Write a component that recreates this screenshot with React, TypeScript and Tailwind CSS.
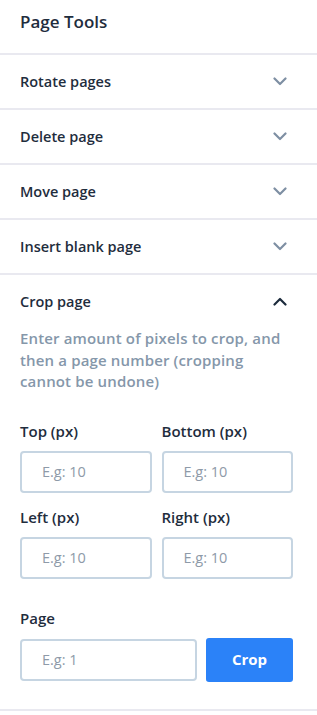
import React from "react";

const Chevron = ({ up = false, dark = false }: { up?: boolean; dark?: boolean }) => (
  <svg width="14" height="9" viewBox="0 0 14 9" fill="none" className={dark ? "text-[#1c2b3c]" : "text-[#7e8fa3]"}>
    <path d={up ? "M1.5 7.5L7 2L12.5 7.5" : "M1.5 1.5L7 7L12.5 1.5"} stroke="currentColor" strokeWidth="2.2" strokeLinecap="round" strokeLinejoin="round" />
  </svg>
);

const Row = ({ label }: { label: string }) => (
  <div className="border-t-2 border-[#e9e9f0] h-[55px] pl-5 pr-6 flex items-center justify-between">
    <span className="text-[14.5px] font-semibold text-[#1f2d3d]">{label}</span>
    <span className="mr-[6px] flex items-center"><Chevron /></span>
  </div>
);

const Field = ({ label, ph, className = "" }: { label: string; ph: string; className?: string }) => (
  <div className={"flex flex-col " + className}>
    <label className="text-[15px] leading-[20px] font-semibold text-[#1f2d3d] mb-[10px]">{label}</label>
    <input
      placeholder={ph}
      className="h-[42px] w-full rounded-[4px] border-2 border-[#c6d5e2] pl-5 text-[14.5px] text-[#1f2d3d] placeholder:text-[#8e9aa8] outline-none bg-white"
    />
  </div>
);

export default function App() {
  return (
    <div className="w-[317px] min-h-[715px] bg-white" style={{ fontFamily: "'Open Sans', Lato, sans-serif" }}>
      <div className="h-[53px] pl-5 pr-6 flex items-center">
        <h1 className="text-[17px] font-semibold text-[#1f2d3d] -mt-[10px]">Page Tools</h1>
      </div>
      <Row label="Rotate pages" />
      <Row label="Delete page" />
      <Row label="Move page" />
      <Row label="Insert blank page" />
      <div className="border-t-2 border-[#e9e9f0] pl-5 pr-6 pb-[27px]">
        <div className="h-[53px] flex items-center justify-between">
          <span className="text-[14.5px] font-semibold text-[#1f2d3d]">Crop page</span>
          <span className="mr-[6px] flex items-center"><Chevron up dark /></span>
        </div>
        <p className="text-[15px] leading-[21.5px] tracking-[0.15px] font-semibold text-[#8597aa]">
          Enter amount of pixels to crop, and then a page number (cropping cannot be undone)
        </p>
        <div className="grid grid-cols-2 gap-x-[10px] mt-[28px]">
          <Field label="Top (px)" ph="E.g: 10" />
          <Field label="Bottom (px)" ph="E.g: 10" />
          <Field label="Left (px)" ph="E.g: 10" className="mt-[14px]" />
          <Field label="Right (px)" ph="E.g: 10" className="mt-[14px]" />
        </div>
        <div className="mt-[29px]">
          <label className="block text-[15px] leading-[20px] font-semibold text-[#1f2d3d] mb-[10px]">Page</label>
          <div className="flex items-center gap-[9px]">
            <input
              placeholder="E.g: 1"
              className="h-[42px] w-[177px] rounded-[4px] border-2 border-[#c6d5e2] pl-5 text-[14.5px] placeholder:text-[#8e9aa8] outline-none"
            />
            <button className="h-[44px] flex-1 rounded-[3px] bg-[#2b82f8] text-white text-[15px] font-bold">Crop</button>
          </div>
        </div>
      </div>
      <div className="border-t-2 border-[#e9e9f0]" />
    </div>
  );
}
